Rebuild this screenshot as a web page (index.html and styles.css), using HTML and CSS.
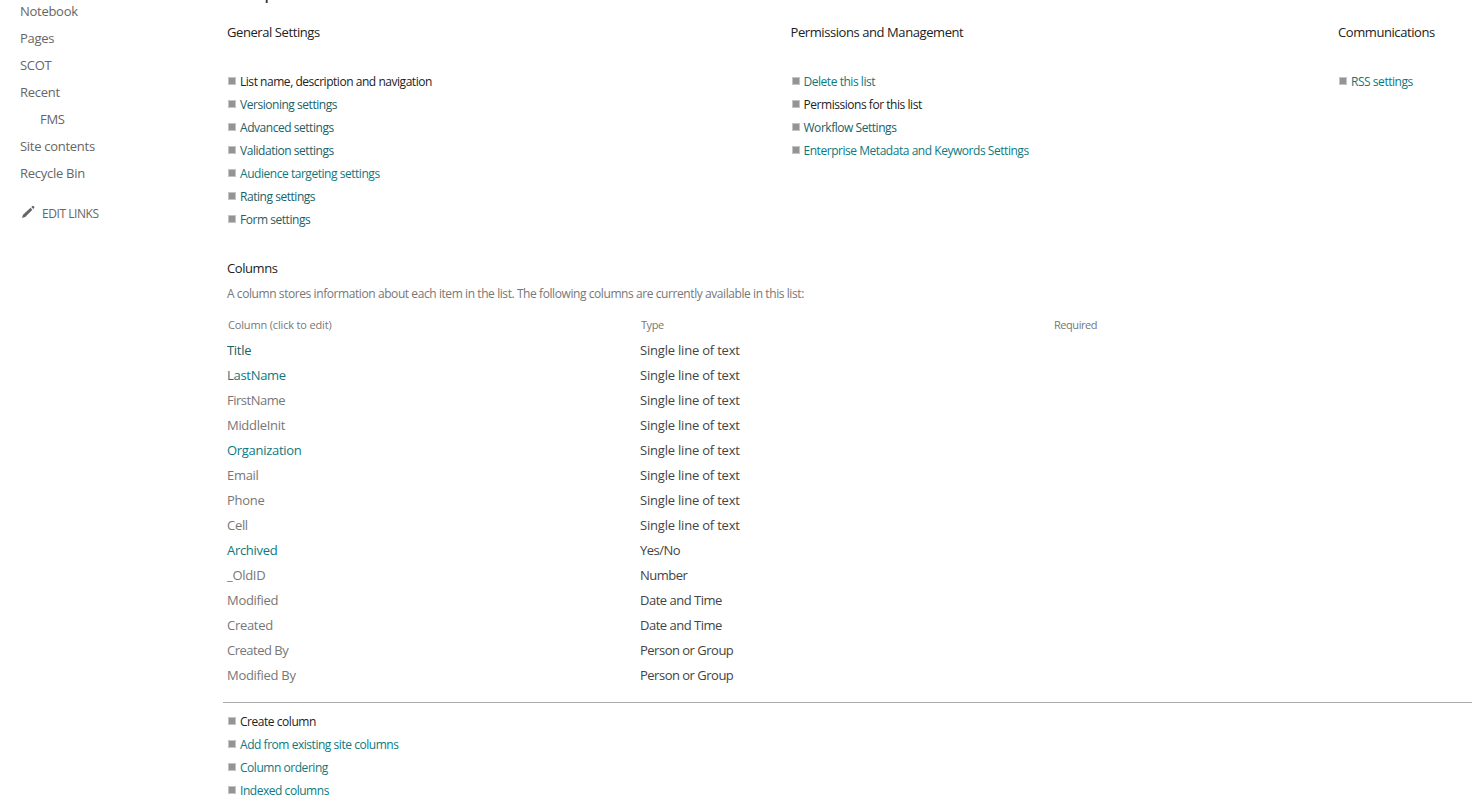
FILE: index.html
```html
<!DOCTYPE html>
<html lang="en">
<head>
<meta charset="utf-8">
<title>List Settings</title>
<link rel="stylesheet" href="styles.css">
</head>
<body>
<div class="page">
  <nav class="side">
    <a class="nav-item">Notebook</a>
    <a class="nav-item">Pages</a>
    <a class="nav-item">SCOT</a>
    <a class="nav-item">Recent</a>
    <a class="nav-item nav-sub">FMS</a>
    <a class="nav-item">Site contents</a>
    <a class="nav-item">Recycle Bin</a>
    <a class="edit-links">
      <svg class="pencil" viewBox="0 0 14 14" width="14" height="14"><path d="M1 13l1-3.2L9.5 2.8l1.9 1.9L4.2 12zM10.3 2l1-1a.8.8 0 0 1 1.1 0l.8.8a.8.8 0 0 1 0 1.1l-1 1z" fill="#666"/></svg>
      <span>EDIT LINKS</span>
    </a>
  </nav>
  <main class="main">
    <h1 class="title">People</h1>
    <div class="settings">
      <section class="group g1">
        <h2 class="group-title">General Settings</h2>
        <ul class="links">
          <li class="dark">List name, description and navigation</li>
          <li class="mid">Versioning settings</li>
          <li class="mid">Advanced settings</li>
          <li class="mid">Validation settings</li>
          <li class="teal">Audience targeting settings</li>
          <li class="mid">Rating settings</li>
          <li class="mid">Form settings</li>
        </ul>
      </section>
      <section class="group g2">
        <h2 class="group-title">Permissions and Management</h2>
        <ul class="links">
          <li class="teal">Delete this list</li>
          <li class="dark">Permissions for this list</li>
          <li class="mid">Workflow Settings</li>
          <li class="teal">Enterprise Metadata and Keywords Settings</li>
        </ul>
      </section>
      <section class="group g3">
        <h2 class="group-title">Communications</h2>
        <ul class="links">
          <li class="teal">RSS settings</li>
        </ul>
      </section>
    </div>
    <h2 class="group-title columns-title">Columns</h2>
    <p class="desc">A column stores information about each item in the list. The following columns are currently available in this list:</p>
    <div class="table">
      <div class="row head"><span>Column (click to edit)</span><span class="head-tight">Type</span><span class="head-tight">Required</span></div>
      <div class="row"><a class="mid">Title</a><span class="type">Single line of text</span></div>
      <div class="row"><a class="teal">LastName</a><span class="type">Single line of text</span></div>
      <div class="row"><a class="grey tight">FirstName</a><span class="type">Single line of text</span></div>
      <div class="row"><a class="grey">MiddleInit</a><span class="type">Single line of text</span></div>
      <div class="row"><a class="teal">Organization</a><span class="type">Single line of text</span></div>
      <div class="row"><a class="grey">Email</a><span class="type">Single line of text</span></div>
      <div class="row"><a class="grey">Phone</a><span class="type">Single line of text</span></div>
      <div class="row"><a class="grey">Cell</a><span class="type">Single line of text</span></div>
      <div class="row"><a class="teal">Archived</a><span class="type tight">Yes/No</span></div>
      <div class="row"><a class="grey">_OldID</a><span class="type tight">Number</span></div>
      <div class="row"><a class="grey">Modified</a><span class="type tight">Date and Time</span></div>
      <div class="row"><a class="grey">Created</a><span class="type tight">Date and Time</span></div>
      <div class="row"><a class="grey tight">Created By</a><span class="type tight">Person or Group</span></div>
      <div class="row"><a class="grey">Modified By</a><span class="type tight">Person or Group</span></div>
    </div>
    <hr class="rule">
    <ul class="links bottom">
      <li class="dark">Create column</li>
      <li class="teal">Add from existing site columns</li>
      <li class="teal">Column ordering</li>
      <li class="teal">Indexed columns</li>
    </ul>
  </main>
</div>
</body>
</html>
```
FILE: styles.css
```css
* { box-sizing: border-box; }
html, body { margin: 0; height: 100%; overflow: hidden; background: #fff; }
body { font-family: "Open Sans", "Liberation Sans", sans-serif; color: #444; }
.page { display: flex; height: 802px; overflow: hidden; }
.side { width: 227px; flex: none; padding-left: 20px; }
.nav-item { display: block; height: 27px; line-height: 22px; font-size: 13px; color: #666; letter-spacing: -0.28px; }
.nav-sub { padding-left: 20px; }
.edit-links { display: flex; align-items: center; gap: 7px; margin-top: 14px; margin-left: 1px; height: 20px; font-size: 12px; color: #666; letter-spacing: -0.45px; }
.pencil { display: block; margin-bottom: 2px; }
.main { flex: 1; min-width: 0; }
.title { margin: -28px 0 0; height: 36px; line-height: 36px; font-size: 21px; font-weight: 400; color: #333; }
.settings { display: flex; height: 236px; margin-top: 14px; }
.g1 { width: 563.5px; }
.g2 { width: 547.5px; }
.g3 { flex: 1; }
.group-title { margin: 0; font-size: 13px; line-height: 20px; font-weight: 400; color: #222; letter-spacing: -0.42px; }
.links { list-style: none; margin: 28px 0 0; padding: 0; }
.links li { display: flex; align-items: center; height: 23px; font-size: 12px; letter-spacing: -0.46px; }
.links li::before { content: ""; width: 6px; height: 6px; margin: 0 4px 2px 1px; background: #949494; border: 1px solid #c4c4c4; flex: none; }
.dark { color: #222; }
.mid { color: #226166; }
.teal { color: #0b7a80; }
.grey { color: #777; }
.columns-title { height: 20px; }
.desc { margin: 8px 0 0; font-size: 12px; line-height: 16px; color: #777; letter-spacing: -0.42px; }
.table { margin-top: 10px; }
.row { display: grid; grid-template-columns: 413px 413px 1fr; height: 25px; line-height: 25px; font-size: 13px; letter-spacing: -0.3px; }
.row.head { height: 26px; padding-left: 1px; font-size: 11px; color: #777; letter-spacing: -0.16px; }
.head-tight { letter-spacing: -0.45px; }
.type { color: #444; letter-spacing: -0.2px; }
.row .tight { letter-spacing: -0.5px; }
.rule { margin: 14px 0 0 -4px; border: 0; border-top: 1px solid #aaa; }
.links.bottom { margin-top: 7px; }
```
